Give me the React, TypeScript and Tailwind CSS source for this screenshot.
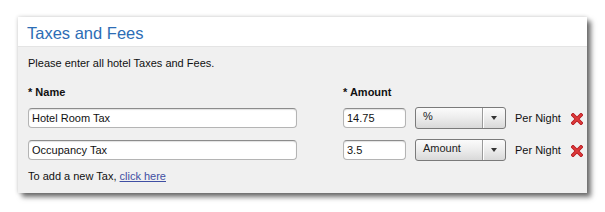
import { useState } from "react";

interface TaxRow {
  name: string;
  amount: string;
  kind: string;
}

function RemoveIcon() {
  return (
    <svg width="12" height="12" viewBox="0 0 12 12" className="block">
      <path
        d="M2 2 L10 10 M10 2 L2 10"
        stroke="#b3141c"
        strokeWidth="3.6"
        strokeLinecap="square"
      />
      <path
        d="M2 2 L10 10 M10 2 L2 10"
        stroke="#dc3a3a"
        strokeWidth="2"
        strokeLinecap="square"
      />
    </svg>
  );
}

function KindSelect({ value }: { value: string }) {
  return (
    <div className="flex h-[22px] w-[91px] shrink-0 rounded-[3px] border border-[#7a7a7a] bg-gradient-to-b from-[#fbfbfb] via-[#ececec] to-[#d9d9d9] text-[11px] text-[#222]">
      <span className="flex-1 pl-[7px] pt-[2px] leading-[13px]">{value}</span>
      <span className="w-px bg-[#9a9a9a] shadow-[1px_0_0_#fff]" />
      <span className="flex w-[22px] items-center justify-center">
        <svg width="6" height="4" viewBox="0 0 6 4">
          <path d="M0 0 H6 L3 4 Z" fill="#333" />
        </svg>
      </span>
    </div>
  );
}

export default function App() {
  const [rows] = useState<TaxRow[]>([
    { name: "Hotel Room Tax", amount: "14.75", kind: "%" },
    { name: "Occupancy Tax", amount: "3.5", kind: "Amount" },
  ]);

  const inputClass =
    "h-[20px] shrink-0 rounded-[4px] border border-[#b4b4b4] border-t-[#8c8c8c] bg-white px-[3px] text-[11px] text-[#111] shadow-[inset_0_1px_1px_rgba(0,0,0,0.12)] outline-none";

  return (
    <div className="h-[212px] w-[605px] bg-white pl-[18px] pt-[17px] font-['Liberation_Sans',Arial,sans-serif]">
      <div className="w-[569px] bg-[#f0f0f0] shadow-[0_0_4px_rgba(0,0,0,0.2),4px_4px_5px_rgba(0,0,0,0.55)]">
        <div className="flex h-[30px] items-center border-b border-[#e4e4e4] bg-white pl-[9px]">
          <h2 className="pt-[2px] text-[16.5px] leading-[18px] text-[#2d6db5]">
            Taxes and Fees
          </h2>
        </div>
        <div className="pb-[10px] pl-[10px] pr-[4px] pt-[9px] text-[11px] leading-[14px] text-[#111]">
          <p>Please enter all hotel Taxes and Fees.</p>
          <div className="mt-[15px] flex font-bold">
            <span className="w-[315px]">* Name</span>
            <span>* Amount</span>
          </div>
          <div className="mt-[8px] flex flex-col gap-[10px]">
            {rows.map((row, index) => (
              <div key={index} className="flex h-[22px] items-center">
                <input
                  type="text"
                  defaultValue={row.name}
                  className={`${inputClass} w-[269px]`}
                />
                <input
                  type="text"
                  defaultValue={row.amount}
                  className={`${inputClass} ml-[46px] w-[63px]`}
                />
                <div className="ml-[9px]">
                  <KindSelect value={row.kind} />
                </div>
                <span className="ml-[9px] w-[56px] shrink-0">Per Night</span>
                <button className="mt-px shrink-0">
                  <RemoveIcon />
                </button>
              </div>
            ))}
          </div>
          <p className="mt-[8px]">
            To add a new Tax,{" "}
            <a href="#" className="text-[#3f4fa3] underline">
              click here
            </a>
          </p>
        </div>
      </div>
    </div>
  );
}
